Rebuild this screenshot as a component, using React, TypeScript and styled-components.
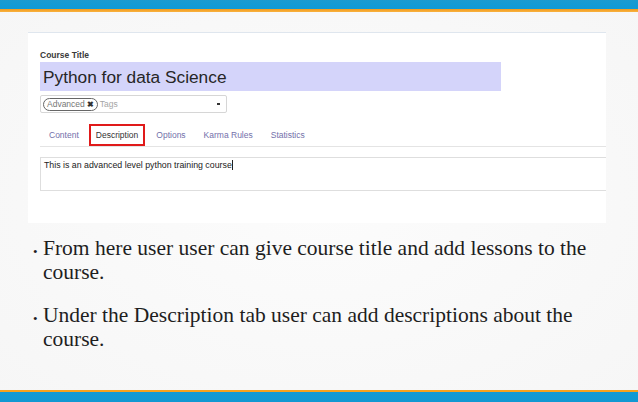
import styled, { createGlobalStyle } from "styled-components";

const GlobalStyle = createGlobalStyle`
  html, body {
    margin: 0;
    padding: 0;
  }
  body {
    width: 638px;
    height: 402px;
    overflow: hidden;
    background: #f8f8f8;
  }
`;

const Slide = styled.div`
  width: 638px;
  height: 402px;
  display: flex;
  flex-direction: column;
  background: radial-gradient(ellipse at center, #fcfcfc 0%, #f6f6f6 100%);
`;

const Band = styled.div<{ $bottom?: boolean }>`
  height: 12px;
  flex: none;
  background: ${(p) =>
    p.$bottom
      ? "linear-gradient(to bottom, #f6a21e 0px, #f6a21e 2px, #129ad4 2px, #1198d2 100%)"
      : "linear-gradient(to bottom, #1a9bd0 0px, #0f9ad6 9px, #f39a1b 9px, #f8b240 12px)"};
`;

const Body = styled.div`
  flex: 1;
  padding: 20px 0 0 28px;
`;

const Panel = styled.div`
  width: 578px;
  height: 191px;
  background: #fff;
  border-top: 1px solid #dfe6ee;
  box-sizing: border-box;
  padding: 17px 0 0 12px;
  font-family: "Liberation Sans", Arial, sans-serif;
`;

const Label = styled.div`
  font-size: 8.5px;
  font-weight: bold;
  color: #3a3a3a;
  height: 12px;
  line-height: 10px;
`;

const TitleInput = styled.div`
  width: 461px;
  height: 29px;
  background: #d4d4fa;
  font-size: 17.3px;
  color: #262626;
  padding-left: 3px;
  box-sizing: border-box;
  line-height: 30px;
`;

const TagsField = styled.div`
  margin-top: 4px;
  width: 187px;
  height: 18px;
  border: 1px solid #d6d6d6;
  border-radius: 2px;
  box-sizing: border-box;
  display: flex;
  align-items: center;
  padding: 0 6px 0 2px;
  gap: 2px;
`;

const Pill = styled.span`
  border: 1px solid #666;
  border-radius: 7px;
  font-size: 8.5px;
  color: #777;
  padding: 0 3px 0 3px;
  height: 11px;
  line-height: 11px;
  display: flex;
  align-items: center;
  gap: 2px;
`;

const PillX = styled.span`
  font-size: 8px;
  color: #333;
  font-weight: bold;
`;

const Placeholder = styled.span`
  font-size: 8.5px;
  color: #a5a5a5;
  flex: 1;
`;

const Caret = styled.span`
  width: 3px;
  height: 2px;
  background: #333;
`;

const TabBar = styled.div`
  margin-top: 11px;
  height: 22px;
  border-bottom: 1px solid #e4e4e4;
  display: flex;
  align-items: stretch;
`;

const Tab = styled.div<{ $active?: boolean }>`
  font-size: 8.5px;
  color: ${(p) => (p.$active ? "#333" : "#7370aa")};
  padding: ${(p) => (p.$active ? "0 5px" : "0 9px")};
  margin: ${(p) => (p.$active ? "0 2px 0 1px" : "0")};
  display: flex;
  align-items: center;
  box-sizing: border-box;
  border: ${(p) => (p.$active ? "2px solid #e01a1a" : "none")};
`;

const TextArea = styled.div`
  margin-top: 10px;
  height: 34px;
  border: 1px solid #dedede;
  border-right: none;
  font-size: 8.8px;
  color: #222;
  padding: 2px 3px;
  box-sizing: border-box;
`;

const Cursor = styled.span`
  display: inline-block;
  width: 1px;
  height: 10px;
  background: #222;
  vertical-align: -2px;
`;

const Bullets = styled.ul`
  list-style: none;
  margin: 13px 0 0 0;
  padding: 0 0 0 5px;
  width: 565px;
  font-family: "Liberation Serif", "Times New Roman", serif;
  font-size: 21.5px;
  line-height: 24px;
  color: #1e1e1e;
`;

const Bullet = styled.li`
  display: flex;
  margin-bottom: 19px;

  &::before {
    content: "•";
    font-size: 13px;
    width: 10px;
    flex: none;
    position: relative;
    top: 4px;
  }
`;

export default function App() {
  return (
    <>
      <GlobalStyle />
      <Slide>
        <Band />
        <Body>
          <Panel>
            <Label>Course Title</Label>
            <TitleInput>Python for data Science</TitleInput>
            <TagsField>
              <Pill>
                Advanced <PillX>✖</PillX>
              </Pill>
              <Placeholder>Tags</Placeholder>
              <Caret />
            </TagsField>
            <TabBar>
              <Tab>Content</Tab>
              <Tab $active>Description</Tab>
              <Tab>Options</Tab>
              <Tab>Karma Rules</Tab>
              <Tab>Statistics</Tab>
            </TabBar>
            <TextArea>
              This is an advanced level python training course
              <Cursor />
            </TextArea>
          </Panel>
          <Bullets>
            <Bullet>
              From here user user can give course title and add lessons to the
              course.
            </Bullet>
            <Bullet>
              Under the Description tab user can add descriptions about the
              course.
            </Bullet>
          </Bullets>
        </Body>
        <Band $bottom />
      </Slide>
    </>
  );
}
